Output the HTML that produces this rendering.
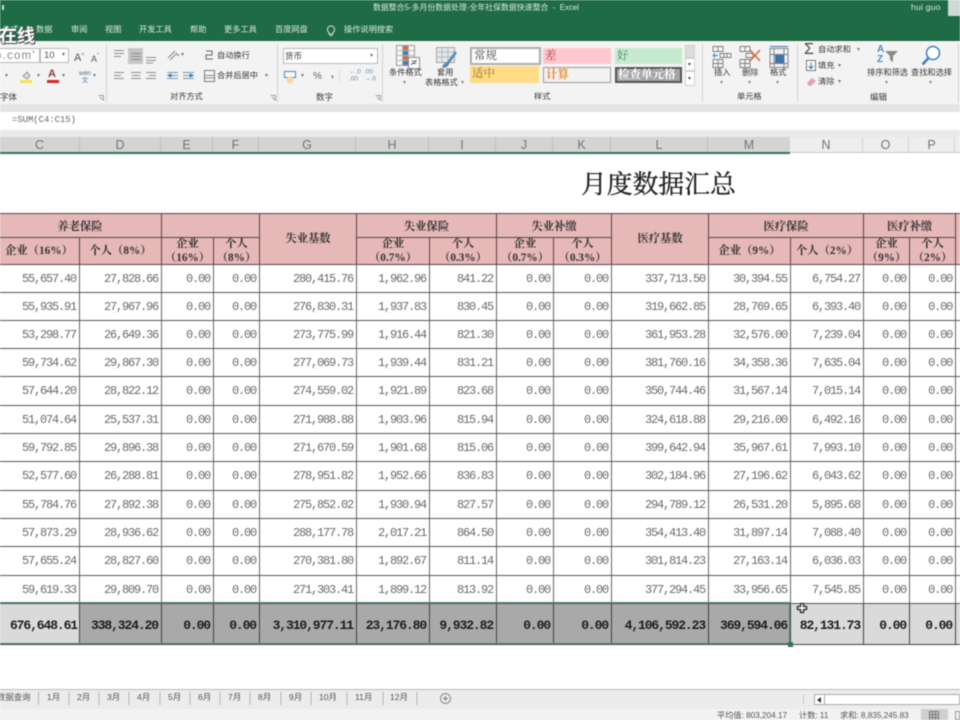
<!DOCTYPE html>
<html><head><meta charset="utf-8"><style>
html,body{margin:0;padding:0;background:#fff}
#p{position:relative;width:960px;height:720px;overflow:hidden;background:#fff;font-family:"Liberation Sans","Noto Sans CJK SC",sans-serif;filter:blur(.45px)}
.a{position:absolute;white-space:nowrap}
.t{position:absolute;white-space:nowrap;font-size:8.2px;line-height:10px;color:#3a3a3a;transform:translateY(-50%)}
.w{color:#dce9e1}
.b{position:absolute}
.sep{position:absolute;width:1px;top:44px;height:58px;background:#d2d2d2}
.hc{position:absolute;top:137px;height:15px;line-height:16px;text-align:center;font-size:12.5px;color:#6d7873}
.st{position:absolute;font-family:"Liberation Serif","Noto Serif CJK SC",serif;font-size:11.5px;line-height:17px;padding-left:2px;box-sizing:border-box;white-space:nowrap}
table{position:absolute;left:-2px;top:213px;border-collapse:collapse;table-layout:fixed;width:964px}
td{border:1px solid #555;border-left-color:#666;border-right-color:#666;padding:0 3px 0 0;text-align:right;font-family:"Liberation Mono",monospace;font-size:12px;letter-spacing:-1.2px;color:#6a6a6a;overflow:hidden;white-space:nowrap}
.h td{background:#e6b8b7;text-align:center;padding:0;font-family:"Liberation Serif","Noto Serif CJK SC",serif;font-weight:700;color:#333;font-size:11.3px;letter-spacing:0;line-height:13px;border-color:#5a4444}
.h td[colspan]{padding-top:3px}
.m{height:26px;line-height:13.5px}
.z td{font-size:13px;letter-spacing:-1.1px;font-weight:700;color:#1c1c1c;background:#a9a9a9;border-color:#444;padding:3px 3px 0 0}
.z .l{background:#dadada}
</style></head><body><div id="p">

<div class="b" style="left:0;top:0;width:960px;height:41px;background:#1e6b45"></div>
<div class="t w" style="left:373px;top:8px;font-size:7.9px">数据整合5-多月份数据处理-全年社保数据快速整合&nbsp; -&nbsp; Excel</div>
<div class="t w" style="left:911px;top:7px;font-size:8.6px;letter-spacing:.2px">hui guo</div>
<div class="b" style="left:948px;top:0;width:12px;height:16px;background:#cfd8d3"></div>
<div class="b" style="left:2px;top:5px;width:2px;height:5px;background:#cfe0d6"></div>
<div class="t w" style="left:2px;top:30px">公式</div>
<div class="t w" style="left:36px;top:30px">数据</div>
<div class="t w" style="left:71px;top:30px">审阅</div>
<div class="t w" style="left:105px;top:30px">视图</div>
<div class="t w" style="left:139px;top:30px">开发工具</div>
<div class="t w" style="left:190px;top:30px">帮助</div>
<div class="t w" style="left:224px;top:30px">更多工具</div>
<div class="t w" style="left:275px;top:30px">百度网盘</div>
<svg class="b" style="left:326px;top:25px" width="10" height="12" viewBox="0 0 10 12"><path d="M5 1a3.5 3.5 0 0 0-2 6.4V9h4V7.400A3.500 3.500 0 0 0 5 1zM3.500 10.500h3" fill="none" stroke="#d5e4db"/></svg>
<div class="t w" style="left:344px;top:30px">操作说明搜索</div>

<div class="b" style="left:0;top:41px;width:960px;height:63px;background:#f3f3f3"></div>
<div class="b" style="left:0;top:104px;width:960px;height:8px;background:#e4e4e4"></div>
<div class="b" style="left:0;top:112px;width:960px;height:18px;background:#fff"></div>
<div class="b" style="left:0;top:130px;width:960px;height:7px;background:#e9e9e9"></div>
<div class="a" style="left:12px;top:114px;font:8.9px/13px 'Liberation Mono',monospace;color:#666">=SUM(C4:C15)</div>

<div class="sep" style="left:106px"></div><div class="sep" style="left:277px"></div><div class="sep" style="left:382px"></div><div class="sep" style="left:702px"></div><div class="sep" style="left:797px"></div><div class="sep" style="left:958px"></div>

<!-- font group -->
<div class="b" style="left:0;top:48px;width:40px;height:15px;background:#fff;border:1px solid #bbb;border-left:0;box-sizing:border-box"></div>
<div class="a" style="left:-5px;top:49px;font-size:11.5px;line-height:14px;color:#888;letter-spacing:1.2px;width:44px;overflow:hidden">p.com'</div>
<div class="b" style="left:40px;top:48px;width:29px;height:15px;background:#fff;border:1px solid #bbb;box-sizing:border-box"></div>
<div class="a" style="left:44px;top:49px;font-size:9.500px;line-height:13px;color:#555">10</div>
<div class="t" style="left:62px;top:55px;font-size:6px;color:#666">▾</div>
<div class="a" style="left:74px;top:49px;font-size:11px;line-height:14px;color:#555">A<span style="font-size:6px;vertical-align:4px">^</span></div>
<div class="a" style="left:91px;top:51px;font-size:9px;line-height:12px;color:#555">A<span style="font-size:6px;vertical-align:4px">ˇ</span></div>
<div class="t" style="left:5px;top:76px;font-size:6px;color:#777">▾</div>
<svg class="b" style="left:20px;top:70px" width="13" height="14" viewBox="0 0 13 14"><path d="M3 6l4-4 3 4-3 3z" fill="#ddd" stroke="#777" stroke-width=".7"/><rect x="0" y="10" width="12" height="3" fill="#f1e348"/></svg>
<div class="t" style="left:37px;top:76px;font-size:6px;color:#777">▾</div>
<div class="a" style="left:48px;top:69px;font-size:11px;font-weight:700;line-height:11px;color:#8a3b3b">A</div>
<div class="b" style="left:47px;top:80px;width:12px;height:3px;background:#d8272c"></div>
<div class="t" style="left:62px;top:76px;font-size:6px;color:#777">▾</div>
<div class="a" style="left:79px;top:71px;font-size:6.500px;line-height:6.500px;color:#667;text-align:center">wén<br><span style="color:#3b7fc0">文</span></div>
<div class="t" style="left:93px;top:76px;font-size:6px;color:#777">▾</div>
<div class="t" style="left:0;top:97px;font-size:8.500px">字体</div>
<svg class="b" style="left:98px;top:95px" width="7" height="7"><path d="M.500.500h5v5M2 2l3 3" fill="none" stroke="#888" stroke-width=".8"/></svg>

<!-- align group -->
<div class="b" style="left:128px;top:48px;width:15px;height:16px;background:#c6c6c6"></div>
<svg class="b" style="left:0;top:0" width="300" height="100" fill="none" stroke="#8f8f8f" stroke-width="1">
<path d="M114 50.500h10M114 53.500h10M114 56.500h7M131 53.500h10M131 56.500h10M131 59.500h10M146 57.500h10M146 60.500h10M146 63h7"/>
<path d="M114 72.500h10M114 75.500h7M114 78.500h10M131 72.500h10M132 75.500h8M131 78.500h10M146 72.500h10M149 75.500h7M146 78.500h10"/>
<path d="M167 72.500h11M171 75.500h7M167 78.500h11M183 72.500h11M183 75.500h7M183 78.500h11" stroke="#7f97aa"/>
<path d="M168 75.500l3-1.500v3zM193 75.500l-3-1.500v3z" fill="#3b7fc0" stroke="#3b7fc0"/>
<path d="M168 58l7-7M170 60l6-6" stroke="#8a7f8f"/><path d="M176 53l3 3" stroke="#7c7c7c"/>
<path d="M206 51h6v4h-6v4h7" stroke="#666"/>
<rect x="204.500" y="70.500" width="10" height="11" stroke="#7f7f7f"/><path d="M205 75.500h9M205 78h9"/>
</svg>
<div class="t" style="left:217px;top:56px">自动换行</div>
<div class="t" style="left:217px;top:76px;color:#333">合并后居中</div>
<div class="t" style="left:181px;top:55px;font-size:6px;color:#777">▾</div>
<div class="t" style="left:265px;top:76px;font-size:6px;color:#777">▾</div>
<div class="t" style="left:170px;top:97px">对齐方式</div>
<svg class="b" style="left:270px;top:95px" width="7" height="7"><path d="M.500.500h5v5M2 2l3 3" fill="none" stroke="#888" stroke-width=".8"/></svg>

<!-- number -->
<div class="b" style="left:283px;top:48px;width:95px;height:16px;background:#fff;border:1px solid #bbb;box-sizing:border-box"></div>
<div class="t" style="left:285px;top:56px;font-size:8.500px">货币</div>
<div class="t" style="left:370px;top:56px;font-size:6px;color:#666">▾</div>
<svg class="b" style="left:284px;top:70px" width="13" height="14"><rect x=".5" y="1.500" width="11" height="6" fill="#f8f8f8" stroke="#4d88b8"/><circle cx="6" cy="10" r="3.500" fill="#f4d9a6"/></svg>
<div class="t" style="left:301px;top:76px;font-size:6px;color:#777">▾</div>
<div class="t" style="left:313px;top:77px;font-size:10px;color:#666">%</div>
<div class="t" style="left:331px;top:75px;font-size:10px;color:#555;font-weight:700">,</div>
<div class="b" style="left:339px;top:70px;width:1px;height:13px;background:#ddd"></div>
<div class="t" style="left:349px;top:76px;font-size:6.500px;line-height:6.500px;color:#6a8aa5;width:11px">←.0<br>.00</div>
<div class="t" style="left:364px;top:76px;font-size:6.500px;line-height:6.500px;color:#6a8aa5;width:11px">.00<br>→.0</div>
<div class="t" style="left:316px;top:97px;font-size:8.500px">数字</div>
<svg class="b" style="left:375px;top:95px" width="7" height="7"><path d="M.500.500h5v5M2 2l3 3" fill="none" stroke="#888" stroke-width=".8"/></svg>

<!-- cond format -->
<svg class="b" style="left:396px;top:45px" width="24" height="25"><rect x=".5" y=".5" width="18" height="20" fill="#f7f7f7" stroke="#9a9a9a"/><path d="M.5 5.500h18M.5 10.500h18M.5 15.500h18M6.500 0v21M12.500 0v21" stroke="#b5b5b5"/><rect x="7" y="6" width="5" height="4" fill="#4a7bb0"/><rect x="7" y="11" width="5" height="4" fill="#c9714f"/><rect x="7" y="1" width="5" height="4" fill="#c9714f"/><rect x="7" y="16" width="5" height="4" fill="#4a7bb0"/><rect x="12.500" y="12.500" width="11" height="11" fill="#fff" stroke="#888"/><path d="M15 20l6-5M15.500 16h5M15.500 18.500h5" stroke="#444" stroke-width=".7"/></svg>
<div class="t" style="left:389px;top:73px">条件格式</div>
<div class="t" style="left:403px;top:83px;font-size:6px;color:#888">▾</div>
<svg class="b" style="left:436px;top:47px" width="24" height="23"><rect x=".5" y=".5" width="18" height="15" fill="#e4e8ec" stroke="#a5a5a5"/><path d="M.5 5h18M.5 10h18M6 0v15M12 0v15" stroke="#b8b8b8"/><path d="M6 21q1-5 5-6l8-11 2 2-8 11q-1 4-7 4z" fill="#5a8bb8"/></svg>
<div class="t" style="left:437px;top:73px">套用</div>
<div class="t" style="left:425px;top:83px">表格格式</div>
<div class="t" style="left:461px;top:83px;font-size:6px;color:#888">▾</div>

<!-- styles -->
<div class="st" style="left:470px;top:47px;width:71px;height:18px;background:#fff;border:2px solid #adadad;color:#444;line-height:15px">常规</div>
<div class="st" style="left:543px;top:48px;width:68px;height:16px;background:#ffc7ce;color:#b4343c">差</div>
<div class="st" style="left:615px;top:48px;width:67px;height:16px;background:#c6ead0;color:#3c8c4c">好</div>
<div class="st" style="left:470px;top:66px;width:69px;height:17px;background:#fddc85;color:#a0702a">适中</div>
<div class="st" style="left:543px;top:67px;width:68px;height:16px;background:#f2f2f2;border:1px solid #999;color:#f08526;line-height:15px;font-weight:700">计算</div>
<div class="st" style="left:615px;top:67px;width:67px;height:16px;background:#a5a5a5;border:2px solid #555;color:#fff;line-height:12px;font-weight:700;padding-left:1px">检查单元格</div>
<div class="b" style="left:685px;top:45px;width:10px;height:13px;background:#dcdcdc;border:1px solid #d0d0d0;box-sizing:border-box"></div>
<div class="b" style="left:685px;top:58px;width:10px;height:13px;background:#fff;border:1px solid #d0d0d0;box-sizing:border-box"></div>
<div class="b" style="left:685px;top:71px;width:10px;height:15px;background:#fff;border:1px solid #d0d0d0;box-sizing:border-box"></div>
<div class="t" style="left:688px;top:65px;font-size:6px;color:#555">▾</div>
<div class="t" style="left:688px;top:79px;font-size:6px;color:#555">▾</div>
<div class="t" style="left:534px;top:97px">样式</div>

<!-- cells -->
<svg class="b" style="left:712px;top:45px" width="80" height="24" fill="none" stroke="#7d7d7d" stroke-width=".9">
<path d="M1 1.500h10v5H1zM6 1.500v5M1 14.500h10v8H1zM6 14.500v8M1 18.500h10"/><path d="M8 8.500h11v4H8zM12 8.500v4M15 8.500v4"/><path d="M1 10.500h5M1 10.500l2-2M1 10.500l2 2" stroke="#3b7fc0"/>
<path d="M28 1.500h10v5H28zM33 1.500v5M28 14.500h10v8H28zM33 14.500v8M28 18.500h10M34 8.500h7v4h-7z"/><path d="M38 5l10 11M48 5L38 16" stroke="#d9693a" stroke-width="1.500"/>
<rect x="58" y="3.500" width="18" height="19" fill="#eef1f4"/><path d="M58 9.500h18M62 3.500v19M72 3.500v19M58 18.500h18"/><rect x="63" y="10" width="9" height="8" fill="#3f73ad" stroke="none"/><path d="M58 1.500h18" stroke="#3f73ad"/>
</svg>
<div class="t" style="left:714px;top:73px">插入</div>
<div class="t" style="left:742px;top:73px">删除</div>
<div class="t" style="left:770px;top:73px">格式</div>
<div class="t" style="left:720px;top:83px;font-size:6px;color:#888">▾</div>
<div class="t" style="left:748px;top:83px;font-size:6px;color:#888">▾</div>
<div class="t" style="left:776px;top:83px;font-size:6px;color:#888">▾</div>
<div class="t" style="left:737px;top:97px">单元格</div>

<!-- edit -->
<div class="a" style="left:804px;top:42px;font-size:16px;line-height:16px;color:#444">Σ</div>
<div class="t" style="left:818px;top:50px">自动求和</div>
<div class="t" style="left:857px;top:50px;font-size:6px;color:#777">▾</div>
<svg class="b" style="left:806px;top:60px" width="10" height="11"><rect x=".5" y=".5" width="9" height="10" fill="#fff" stroke="#777"/><path d="M5 2.500v6M2.500 6L5 8.500 7.500 6" fill="none" stroke="#2f6fb0"/></svg>
<div class="t" style="left:818px;top:66px">填充</div>
<div class="t" style="left:838px;top:66px;font-size:6px;color:#777">▾</div>
<svg class="b" style="left:806px;top:77px" width="11" height="10"><path d="M1 6l5-5 4 3-5 5H3z" fill="#e8a0b0"/></svg>
<div class="t" style="left:818px;top:82px">清除</div>
<div class="t" style="left:838px;top:82px;font-size:6px;color:#777">▾</div>
<div class="a" style="left:877px;top:45px;font-size:10px;line-height:10px;font-weight:700;color:#4a88c8">A</div>
<div class="a" style="left:877px;top:55px;font-size:10px;line-height:10px;font-weight:700;color:#4a88c8">Z</div>
<svg class="b" style="left:885px;top:50px" width="13" height="13"><path d="M0 1h13L8 6v6L5 10V6z" fill="#8a8a8a"/></svg>
<div class="t" style="left:867px;top:73px">排序和筛选</div>
<div class="t" style="left:911px;top:73px">查找和选择</div>
<div class="t" style="left:885px;top:83px;font-size:6px;color:#888">▾</div>
<div class="t" style="left:929px;top:83px;font-size:6px;color:#888">▾</div>
<svg class="b" style="left:921px;top:45px" width="20" height="21"><circle cx="12" cy="8" r="6.500" fill="#fff" stroke="#3f7fbf" stroke-width="1.500"/><path d="M7.500 13L1.500 19.500" stroke="#3f7fbf" stroke-width="2.500"/></svg>
<div class="t" style="left:870px;top:97px;font-size:8.500px">编辑</div>

<!-- col headers -->
<div class="b" style="left:0;top:137px;width:790px;height:15px;background:#d4d4d4"></div>
<div class="b" style="left:790px;top:137px;width:170px;height:15px;background:#eeeeee"></div>
<div class="b" style="left:0;top:152px;width:790px;height:2px;background:#2f7555"></div>
<div class="b" style="left:790px;top:152px;width:170px;height:1px;background:#c8c8c8"></div>
<div class="hc" style="left:0;width:79px;border-right:1px solid #bdbdbd">C</div>
<div class="hc" style="left:80px;width:80px;border-right:1px solid #bdbdbd">D</div>
<div class="hc" style="left:161px;width:51px;border-right:1px solid #bdbdbd">E</div>
<div class="hc" style="left:213px;width:45px;border-right:1px solid #bdbdbd">F</div>
<div class="hc" style="left:259px;width:96px;border-right:1px solid #bdbdbd">G</div>
<div class="hc" style="left:356px;width:72px;border-right:1px solid #bdbdbd">H</div>
<div class="hc" style="left:429px;width:66px;border-right:1px solid #bdbdbd">I</div>
<div class="hc" style="left:496px;width:56px;border-right:1px solid #bdbdbd">J</div>
<div class="hc" style="left:553px;width:57px;border-right:1px solid #bdbdbd">K</div>
<div class="hc" style="left:611px;width:96px;border-right:1px solid #bdbdbd">L</div>
<div class="hc" style="left:708px;width:82px">M</div>
<div class="hc" style="left:790px;width:72px;border-right:1px solid #d4d4d4">N</div>
<div class="hc" style="left:863px;width:45px;border-right:1px solid #d4d4d4">O</div>
<div class="hc" style="left:909px;width:45px;border-right:1px solid #d4d4d4">P</div>

<!-- title -->
<div class="a" style="left:581px;top:166px;font-family:'Liberation Serif','Noto Serif CJK SC',serif;font-size:25.800px;line-height:38px;color:#222;-webkit-text-stroke:.35px #222">月度数据汇总</div>

<table>
<colgroup><col style="width:81px"><col style="width:82px"><col style="width:52px"><col style="width:46px"><col style="width:97px"><col style="width:73px"><col style="width:67px"><col style="width:57px"><col style="width:58px"><col style="width:97px"><col style="width:82px"><col style="width:73px"><col style="width:46px"><col style="width:46px"><col style="width:8px"></colgroup>
<tr class="h" style="height:24px"><td colspan="2">养老保险</td><td colspan="2"></td><td rowspan="2">失业基数</td><td colspan="2">失业保险</td><td colspan="2">失业补缴</td><td rowspan="2">医疗基数</td><td colspan="2">医疗保险</td><td colspan="2">医疗补缴</td><td rowspan="2"></td></tr>
<tr class="h" style="height:27px"><td>企业（16%）</td><td>个人（8%）</td><td><div class="m">企业<br>（16%）</div></td><td><div class="m">个人<br>（8%）</div></td><td><div class="m">企业<br>（0.7%）</div></td><td><div class="m">个人<br>（0.3%）</div></td><td><div class="m">企业<br>（0.7%）</div></td><td><div class="m">个人<br>（0.3%）</div></td><td>企业（9%）</td><td>个人（2%）</td><td><div class="m">企业<br>（9%）</div></td><td><div class="m">个人<br>（2%）</div></td></tr>
<tr style="height:28px"><td>55,657.40</td><td>27,828.66</td><td>0.00</td><td>0.00</td><td>280,415.76</td><td>1,962.96</td><td>841.22</td><td>0.00</td><td>0.00</td><td>337,713.50</td><td>30,394.55</td><td>6,754.27</td><td>0.00</td><td>0.00</td><td></td></tr>
<tr style="height:28px"><td>55,935.91</td><td>27,967.96</td><td>0.00</td><td>0.00</td><td>276,830.31</td><td>1,937.83</td><td>830.45</td><td>0.00</td><td>0.00</td><td>319,662.85</td><td>28,769.65</td><td>6,393.40</td><td>0.00</td><td>0.00</td><td></td></tr>
<tr style="height:28px"><td>53,298.77</td><td>26,649.36</td><td>0.00</td><td>0.00</td><td>273,775.99</td><td>1,916.44</td><td>821.30</td><td>0.00</td><td>0.00</td><td>361,953.28</td><td>32,576.00</td><td>7,239.04</td><td>0.00</td><td>0.00</td><td></td></tr>
<tr style="height:28px"><td>59,734.62</td><td>29,867.30</td><td>0.00</td><td>0.00</td><td>277,069.73</td><td>1,939.44</td><td>831.21</td><td>0.00</td><td>0.00</td><td>381,760.16</td><td>34,358.36</td><td>7,635.04</td><td>0.00</td><td>0.00</td><td></td></tr>
<tr style="height:29px"><td>57,644.20</td><td>28,822.12</td><td>0.00</td><td>0.00</td><td>274,559.02</td><td>1,921.89</td><td>823.68</td><td>0.00</td><td>0.00</td><td>350,744.46</td><td>31,567.14</td><td>7,015.14</td><td>0.00</td><td>0.00</td><td></td></tr>
<tr style="height:28px"><td>51,074.64</td><td>25,537.31</td><td>0.00</td><td>0.00</td><td>271,988.88</td><td>1,903.96</td><td>815.94</td><td>0.00</td><td>0.00</td><td>324,618.88</td><td>29,216.00</td><td>6,492.16</td><td>0.00</td><td>0.00</td><td></td></tr>
<tr style="height:28px"><td>59,792.85</td><td>29,896.38</td><td>0.00</td><td>0.00</td><td>271,670.59</td><td>1,901.68</td><td>815.06</td><td>0.00</td><td>0.00</td><td>399,642.94</td><td>35,967.61</td><td>7,993.10</td><td>0.00</td><td>0.00</td><td></td></tr>
<tr style="height:29px"><td>52,577.60</td><td>26,288.81</td><td>0.00</td><td>0.00</td><td>278,951.82</td><td>1,952.66</td><td>836.83</td><td>0.00</td><td>0.00</td><td>302,184.96</td><td>27,196.62</td><td>6,043.62</td><td>0.00</td><td>0.00</td><td></td></tr>
<tr style="height:28px"><td>55,784.76</td><td>27,892.38</td><td>0.00</td><td>0.00</td><td>275,852.02</td><td>1,930.94</td><td>827.57</td><td>0.00</td><td>0.00</td><td>294,789.12</td><td>26,531.20</td><td>5,895.68</td><td>0.00</td><td>0.00</td><td></td></tr>
<tr style="height:28px"><td>57,873.29</td><td>28,936.62</td><td>0.00</td><td>0.00</td><td>288,177.78</td><td>2,017.21</td><td>864.50</td><td>0.00</td><td>0.00</td><td>354,413.40</td><td>31,897.14</td><td>7,088.40</td><td>0.00</td><td>0.00</td><td></td></tr>
<tr style="height:29px"><td>57,655.24</td><td>28,827.60</td><td>0.00</td><td>0.00</td><td>270,381.80</td><td>1,892.67</td><td>811.14</td><td>0.00</td><td>0.00</td><td>301,814.23</td><td>27,163.14</td><td>6,036.03</td><td>0.00</td><td>0.00</td><td></td></tr>
<tr style="height:28px"><td>59,619.33</td><td>29,809.70</td><td>0.00</td><td>0.00</td><td>271,303.41</td><td>1,899.12</td><td>813.92</td><td>0.00</td><td>0.00</td><td>377,294.45</td><td>33,956.65</td><td>7,545.85</td><td>0.00</td><td>0.00</td><td></td></tr>
<tr class="z" style="height:41px"><td class="l" style="padding-right:2px">676,648.61</td><td>338,324.20</td><td>0.00</td><td>0.00</td><td>3,310,977.11</td><td>23,176.80</td><td>9,932.82</td><td>0.00</td><td>0.00</td><td>4,106,592.23</td><td>369,594.06</td><td class="l">82,131.73</td><td class="l">0.00</td><td class="l">0.00</td><td class="l"></td></tr>
</table>

<!-- selection -->
<div class="b" style="left:-2px;top:602px;width:792px;height:42px;border:1px solid #4f8f73;box-sizing:border-box"></div>
<div class="b" style="left:788px;top:642px;width:5px;height:5px;background:#2f7555"></div>
<svg class="b" style="left:796px;top:602px" width="13" height="13"><path d="M4.500 1.500h3v3h3v3h-3v3h-3v-3h-3v-3h3z" fill="#fff" stroke="#222" stroke-width="1.300"/></svg>

<!-- sheet tabs -->
<div class="b" style="left:0;top:689px;width:960px;height:20px;background:#ececec;border-top:1px solid #bdbdbd;box-sizing:border-box"></div>
<div class="b" style="left:0;top:709px;width:960px;height:11px;background:#f2f2f2"></div>
<div class="t" style="left:-3px;top:697px;color:#555;font-size:8.400px">数据查询</div>
<div class="t" style="left:47px;top:697px;color:#555;font-size:8.500px">1月</div>
<div class="t" style="left:77px;top:697px;color:#555;font-size:8.500px">2月</div>
<div class="t" style="left:107px;top:697px;color:#555;font-size:8.500px">3月</div>
<div class="t" style="left:137px;top:697px;color:#555;font-size:8.500px">4月</div>
<div class="t" style="left:168px;top:697px;color:#555;font-size:8.500px">5月</div>
<div class="t" style="left:198px;top:697px;color:#555;font-size:8.500px">6月</div>
<div class="t" style="left:228px;top:697px;color:#555;font-size:8.500px">7月</div>
<div class="t" style="left:258px;top:697px;color:#555;font-size:8.500px">8月</div>
<div class="t" style="left:289px;top:697px;color:#555;font-size:8.500px">9月</div>
<div class="t" style="left:319px;top:697px;color:#555;font-size:8.500px">10月</div>
<div class="t" style="left:355px;top:697px;color:#555;font-size:8.500px">11月</div>
<div class="t" style="left:390px;top:697px;color:#555;font-size:8.500px">12月</div>
<svg class="b" style="left:0;top:690px" width="460" height="18" fill="none" stroke="#b5b5b5"><path d="M38.500 2v13M69 2v13M99 2v13M129 2v13M160 2v13M190 2v13M220 2v13M250 2v13M281 2v13M311 2v13M347 2v13M383 2v13M417 2v13"/><circle cx="445.500" cy="8.500" r="5" stroke="#8a8a8a"/><path d="M443 8.500h5M445.500 6v5" stroke="#777"/></svg>
<div class="b" style="left:803px;top:695px;width:1px;height:9px;border-left:1px dotted #aaa"></div>
<div class="b" style="left:814px;top:694px;width:146px;height:11px;background:#fff;border:1px solid #aaa;box-sizing:border-box"></div>
<div class="b" style="left:824px;top:694px;width:1px;height:11px;background:#aaa"></div>
<div class="b" style="left:817px;top:697px;width:0;height:0;border:3px solid transparent;border-right:4px solid #333;border-left:0"></div>
<div class="t" style="left:717px;top:716px;color:#555;font-size:8.200px">平均值: 803,204.17</div>
<div class="t" style="left:799px;top:716px;color:#555;font-size:8.200px">计数: 11</div>
<div class="t" style="left:840px;top:716px;color:#555;font-size:8.200px">求和: 8,835,245.83</div>
<div class="b" style="left:921px;top:709px;width:27px;height:11px;background:#cfcfcf"></div>
<svg class="b" style="left:929px;top:711px" width="11" height="9" fill="none" stroke="#777"><path d="M.5 .5h9v9h-9zM3.500 0v9M6.500 0v9M0 3.500h10M0 6.500h10"/></svg>
<div class="b" style="left:955px;top:711px;width:5px;height:9px;border:1px solid #999;box-sizing:border-box"></div>

<!-- watermark -->
<div class="a" style="left:-1px;top:25px;font-size:18px;line-height:22px;font-weight:700;color:#fff;text-shadow:1px 1px 0 #444,-1px 0 0 #666,0 1px 0 #444">在线</div>
</div></body></html>
